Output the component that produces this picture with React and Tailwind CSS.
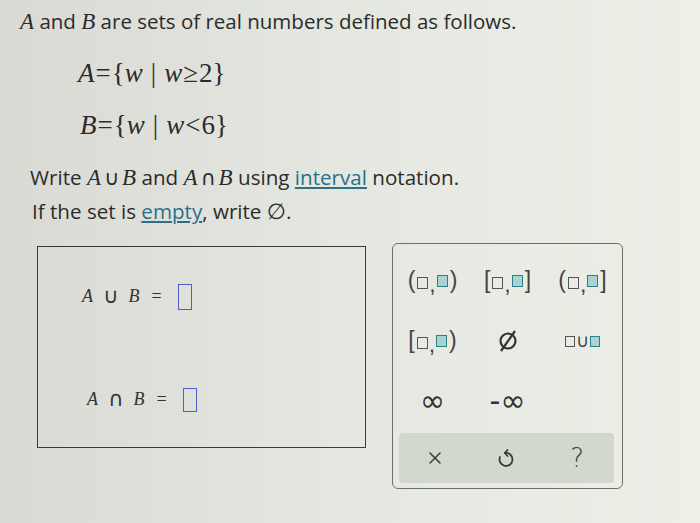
import { X } from 'lucide-react';

function Sq({ teal = false, small = false }) {
  const size = small ? 'w-[10px] h-[11px]' : 'w-[11px] h-[12px]';
  return (
    <span
      className={`inline-block ${size} border-[1.5px] ${
        teal ? 'border-[#2f7f86] bg-[#a8d3d2]' : 'border-[#555]'
      }`}
    />
  );
}

function Interval({ open, close }) {
  return (
    <span className="flex items-center text-[23px] leading-none text-[#444] font-['Liberation_Sans']">
      <span className="-mt-[2px]">{open}</span>
      <span className="ml-[2px]"><Sq /></span>
      <span className="mx-[1px] mt-[6px]">,</span>
      <Sq teal />
      <span className="ml-[2px] -mt-[2px]">{close}</span>
    </span>
  );
}

function Cell({ children }) {
  return <div className="flex items-center justify-center h-[60px]">{children}</div>;
}

function V({ children }) {
  return <i className="font-['Liberation_Serif'] text-[23px]">{children}</i>;
}

export default function App() {
  return (
    <div className="w-[700px] h-[523px] overflow-hidden bg-gradient-to-r from-[#dadad5] via-[#e5e7e1] to-[#edf0e7] text-[#2b2b2b] font-['Open_Sans']">
      <p className="pl-[20px] pt-[7px] text-[20.5px] leading-[28px]">
        <V>A</V> and <V>B</V> are sets of real numbers defined as follows.
      </p>

      <div className="pl-[78px] mt-[22px] font-['Liberation_Serif'] text-[27px] leading-[30px] flex flex-col gap-[22px]">
        <div>
          <i>A</i>
          <span className="mx-[1px]">=</span>
          {'{'}<i>w</i>
          <span className="mx-[8px]">|</span>
          <i>w</i>
          <span className="mx-[1px]">≥</span>2{'}'}
        </div>
        <div className="pl-[2px]">
          <i>B</i>
          <span className="mx-[1px]">=</span>
          {'{'}<i>w</i>
          <span className="mx-[8px]">|</span>
          <i>w</i>
          <span className="mx-[1px]">&lt;</span>6{'}'}
        </div>
      </div>

      <div className="pl-[30px] mt-[25px] text-[20.6px] leading-[24px] flex flex-col gap-[9px]">
        <p>
          Write <V>A</V>
          <span className="font-['DejaVu_Sans'] mx-[3px]">∪</span>
          <V>B</V> and <V>A</V>
          <span className="font-['DejaVu_Sans'] mx-[3px]">∩</span>
          <V>B</V> using{' '}
          <span className="text-[#2c6f86] underline underline-offset-2">interval</span> notation.
        </p>
        <p className="pl-[2px]">
          If the set is <span className="text-[#2c6f86] underline underline-offset-2">empty</span>, write{' '}
          <span className="font-['DejaVu_Sans'] text-[22px]">∅</span>.
        </p>
      </div>

      <div className="flex items-start mt-[19px] pl-[37px]">
        <div className="mt-[3px] w-[329px] h-[202px] border-[1.5px] border-[#3a3a3a] font-['Liberation_Serif'] text-[18px] text-[#333]">
          <div className="flex items-center pl-[44px] pt-[36px] gap-[10px]">
            <i>A</i>
            <span className="font-['DejaVu_Sans'] text-[21px] leading-none">∪</span>
            <i>B</i>
            <span className="ml-[2px]">=</span>
            <span className="ml-[6px] inline-block w-[14px] h-[26px] border-[1.5px] border-[#4a5fd0]" />
          </div>
          <div className="flex items-center pl-[49px] mt-[76px] gap-[10px]">
            <i>A</i>
            <span className="font-['DejaVu_Sans'] text-[21px] leading-none">∩</span>
            <i>B</i>
            <span className="ml-[2px]">=</span>
            <span className="ml-[6px] inline-block w-[14px] h-[24px] border-[1.5px] border-[#4a5fd0]" />
          </div>
        </div>

        <div className="ml-[26px] w-[231px] h-[246px] border border-[#6e6e6e] rounded-md flex flex-col">
          <div className="grid grid-cols-3 px-[2px] pt-[7px]">
            <Cell><Interval open="(" close=")" /></Cell>
            <Cell><Interval open="[" close="]" /></Cell>
            <Cell><Interval open="(" close="]" /></Cell>
            <Cell><Interval open="[" close=")" /></Cell>
            <Cell>
              <svg width="22" height="24" viewBox="0 0 22 24" fill="none" stroke="#333" strokeWidth="2.2">
                <circle cx="11" cy="12" r="7.5" />
                <line x1="18" y1="2" x2="4" y2="22" />
              </svg>
            </Cell>
            <Cell>
              <span className="flex items-center gap-[1px] text-[18px] text-[#444]">
                <Sq small />
                <span className="leading-none -mt-[2px]">∪</span>
                <Sq small teal />
              </span>
            </Cell>
            <Cell>
              <span className="font-['DejaVu_Sans'] text-[30px] leading-none text-[#333]">∞</span>
            </Cell>
            <Cell>
              <span className="font-['DejaVu_Sans'] text-[30px] leading-none text-[#333]">-∞</span>
            </Cell>
            <Cell />
          </div>
          <div className="mt-[2px] ml-[6px] mr-[8px] h-[50px] bg-[#d3d8cd] rounded-sm grid grid-cols-3 items-center text-[#3a3a3a]">
            <div className="flex justify-center">
              <X size={20} strokeWidth={1.8} />
            </div>
            <div className="flex justify-center">
              <svg width="20" height="22" viewBox="0 0 20 22" fill="none" stroke="#3a3a3a" strokeWidth="1.8" strokeLinecap="round" strokeLinejoin="round">
                <path d="M9 6 A6.5 6.5 0 1 1 4 10" />
                <path d="M11.5 3 L8.8 6 L11.5 9" />
              </svg>
            </div>
            <div className="flex justify-center pr-[2px]">
              <span className="text-[26px] leading-none font-['DejaVu_Sans'] font-light text-[#444]">?</span>
            </div>
          </div>
        </div>
      </div>
    </div>
  );
}
